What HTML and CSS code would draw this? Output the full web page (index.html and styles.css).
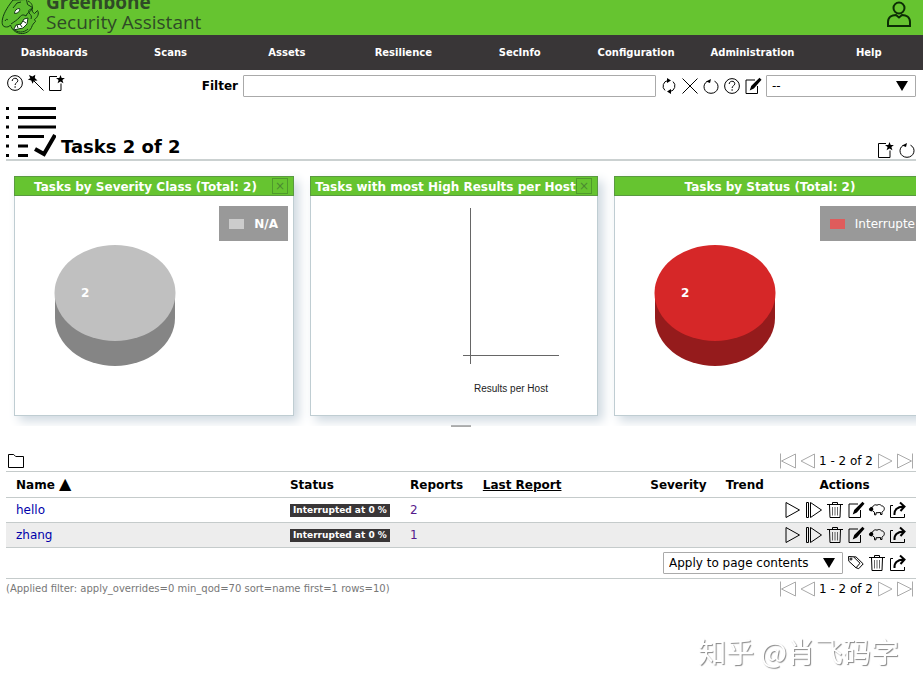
FILE: index.html
```
<!DOCTYPE html>
<html lang="en">
<head>
<meta charset="UTF-8">
<meta name="viewport" content="width=device-width, initial-scale=1">
<title>Greenbone Security Assistant - Tasks</title>
<link rel="stylesheet" href="styles.css">
</head>
<body>

<!-- shared icons -->
<svg class="sprite" aria-hidden="true">
  <symbol id="i-help" viewBox="0 0 18 18"><circle cx="9" cy="9" r="7.4"/><path d="M6.200 7c0-3.600 5.600-3.600 5.600-.3 0 2-2.700 2-2.700 4.300M9.100 12.200v1.600"/></symbol>
  <symbol id="i-wizard" viewBox="0 0 18 18"><path d="M7 7l9.500 9.500"/><path class="solid" d="M2 1l3.400 1.600L8.300.8l-.5 3.300 2.700 2.400-3.500.2-1.500 3-1.200-3.300L.8 5.500l2.500-1.300z"/></symbol>
  <symbol id="i-new" viewBox="0 0 18 18"><path d="M9 2.500H1.500v14h11.500V9.500"/><path class="solid" d="M12.500 1l1.200 3h3.200l-2.500 2.100 1 3.200-2.900-1.900-2.900 1.900 1-3.200L8 4h3.300z"/></symbol>
  <symbol id="i-refresh" viewBox="0 0 18 18"><path d="M8 3.500A5.700 5.700 0 0 0 5 13.400M10 14.500A5.700 5.700 0 0 0 13 4.600"/><path class="solid" d="M7 1l4 2.500-4 2.500zM11 12l-4 2.500 4 2.500z"/></symbol>
  <symbol id="i-close" viewBox="0 0 18 18"><path d="M1.500 1.500l15 15M16.500 1.500l-15 15"/></symbol>
  <symbol id="i-reset" viewBox="0 0 18 18"><path d="M5 4.500C-.5 8 2 16.300 9 16.300c7.500 0 9.500-9.300 3.500-12.100"/><path class="solid" d="M4 4.500L9 2 8 6z"/></symbol>
  <symbol id="i-edit" viewBox="0 0 18 18"><path d="M11 3H2v13.500h11.500V9"/><path class="solid" d="M15.500.8l2 2-7.600 8.600-4.200 2 1.500-4.500z"/></symbol>
  <symbol id="i-start" viewBox="0 0 18 18"><path d="M2 1.500v15L15.500 9z"/></symbol>
  <symbol id="i-resume" viewBox="0 0 18 18"><path d="M1.500 1.500v15h2v-15zM5.500 1.500v15L16.500 9z"/></symbol>
  <symbol id="i-trash" viewBox="0 0 18 18"><path d="M1 3.500h16M6.500 3.500v-2h5v2M3.500 4l.5 12.500h10l.5-12.500"/><path class="faint" d="M6.500 6v8.500M9 6v8.500M11.500 6v8.500"/></symbol>
  <symbol id="i-clone" viewBox="0 0 18 18"><path d="M4.500 6C5.500 4 7.500 3.300 9 4.200c1.800-1.200 3.500-.7 4.500.6 2.800 0 3.800 3.700 1.700 5.200l-1.200 1.200V13.500h-1.500v-2l-4.500.3v2H6.500v-2.500L4.500 9.800"/><path class="solid" d="M.8 8L3 5.800l2 .7.300 2.500-1.800 1.500-2-.8z"/></symbol>
  <symbol id="i-export" viewBox="0 0 18 18"><path d="M4 4.500H1.500v12h14V13"/><path class="thick" d="M5.500 14C5 9 8 5.800 14.500 5.500M11 1.500l4.500 4L11.500 10"/></symbol>
  <symbol id="i-tag" viewBox="0 0 18 18"><path d="M1.500 2.500l5 .3 6.500 6.400-4 4.600L1.800 7.200zM6.500 2.800l2.500.1 7.200 7-4.500 4.800-2.700-1"/><circle cx="4" cy="5" r="1"/></symbol>
  <symbol id="i-folder" viewBox="0 0 18 18"><path d="M2.500 15.500v-13h5.200l2 2h7.800v11z"/></symbol>
  <symbol id="i-first" viewBox="0 0 18 18"><path d="M1.500 1.500v15M16.500 2v14L2.500 9z"/></symbol>
  <symbol id="i-prev" viewBox="0 0 18 18"><path d="M15.500 2v14L2 9z"/></symbol>
  <symbol id="i-next" viewBox="0 0 18 18"><path d="M2.500 2v14L16 9z"/></symbol>
  <symbol id="i-last" viewBox="0 0 18 18"><path d="M16.500 1.500v15M1.500 2v14L15.500 9z"/></symbol>
</svg>

<header class="topbar">
  <a class="brand" href="#">
    <svg class="dragon" viewBox="0 0 40 35" aria-hidden="true">
      <path class="skin" d="M13 0C9 5 4 12 2.500 19c-1 5 0 8 4 8 2.500 0 3-1 4-2 1 4 5 8 10 8.500 5 .5 9-2 11-6 1-3 2-4 4-6l-1-2c3-2 5-6 3-9l-3 3c-2-1-3-3-2-6l-5-3-1-5z"/>
      <path d="M28 1c4 2 5 5 4 8-2 4-5 3-6 7-3-2-5-1-7 2-2 2-5 4-8 6M32 9c-3 0-4 2-3 4 2 2 3 3 2 6M14 29c3 4 10 4 14 0M5 21c1-2 2-2 3-1M13 8l4-5 4-1"/>
      <path class="white" d="M14.500 13.500c0-3 2-5 5-5 1 2-1 5-5 5zM13.500 30l2.500-5 5-1 3-5 4-1-1 6-4 4-5 1z"/>
      <path d="M17 25l1 3M20 24l2 3M23 21l3 2"/>
    </svg>
    <span class="brand-text"><strong>Greenbone</strong><span>Security Assistant</span></span>
  </a>
  <button class="user" aria-label="User">
    <svg viewBox="0 0 26 26" aria-hidden="true"><circle cx="13" cy="7" r="5.500"/><path d="M2 25v-4c0-5 4-7 8-7l3 2.500 3-2.500c4 0 8 2 8 7v4z"/></svg>
  </button>
</header>

<nav class="menu">
  <a href="#">Dashboards</a>
  <a href="#">Scans</a>
  <a href="#">Assets</a>
  <a href="#">Resilience</a>
  <a href="#">SecInfo</a>
  <a href="#">Configuration</a>
  <a href="#">Administration</a>
  <a href="#">Help</a>
</nav>

<main>
  <div class="toolbar">
    <div class="icons">
      <button aria-label="Help"><svg><use href="#i-help"/></svg></button>
      <button aria-label="Task wizard"><svg><use href="#i-wizard"/></svg></button>
      <button aria-label="New task"><svg><use href="#i-new"/></svg></button>
    </div>
    <form class="filter">
      <label for="filter">Filter</label>
      <input id="filter" type="text">
      <div class="icons">
        <button type="button" aria-label="Update filter"><svg><use href="#i-refresh"/></svg></button>
        <button type="button" aria-label="Remove filter"><svg><use href="#i-close"/></svg></button>
        <button type="button" aria-label="Reset filter"><svg><use href="#i-reset"/></svg></button>
        <button type="button" aria-label="Filter help"><svg><use href="#i-help"/></svg></button>
        <button type="button" aria-label="Edit filter"><svg><use href="#i-edit"/></svg></button>
      </div>
      <span class="select"><select aria-label="Saved filter"><option>--</option></select></span>
    </form>
  </div>

  <div class="heading">
    <svg class="task-icon" viewBox="0 0 50 51" aria-hidden="true">
      <path d="M0 2.500h3M0 11.500h3M0 21h3M0 30.500h3M0 40h3M0 49.500h3M12 2.500h38M12 11.500h38M12 21h38M12 30.500h26M12 40h10M12 49.500h10"/>
      <path class="check" d="M29 43l9 5 11-19"/>
    </svg>
    <h1>Tasks 2 of 2</h1>
    <div class="icons">
      <button aria-label="New display"><svg><use href="#i-new"/></svg></button>
      <button aria-label="Reset displays"><svg><use href="#i-reset"/></svg></button>
    </div>
  </div>

  <div class="dashboard">
    <section class="display">
      <h2>Tasks by Severity Class (Total: 2)</h2>
      <button class="remove" aria-label="Remove display">×</button>
      <div class="chart">
        <svg class="pie gray" viewBox="0 0 122 121" role="img" aria-label="N/A: 2">
          <path class="side" d="M1 48v25a60 48 0 0 0 120 0V48z"/>
          <ellipse class="top" cx="61" cy="48" rx="60.500" ry="48"/>
          <text x="27" y="52">2</text>
        </svg>
        <div class="legend"><i class="swatch gray"></i><b>N/A</b></div>
      </div>
    </section>

    <section class="display">
      <h2>Tasks with most High Results per Host</h2>
      <button class="remove" aria-label="Remove display">×</button>
      <div class="chart">
        <svg class="axes" viewBox="0 0 286 218" role="img" aria-label="Results per Host">
          <path d="M159.500 13v156M152 160.500h96"/>
          <text x="163" y="197">Results per Host</text>
        </svg>
      </div>
    </section>

    <section class="display wide">
      <h2>Tasks by Status (Total: 2)</h2>
      <div class="chart">
        <svg class="pie red" viewBox="0 0 122 121" role="img" aria-label="Interrupted: 2">
          <path class="side" d="M1 48v25a60 48 0 0 0 120 0V48z"/>
          <ellipse class="top" cx="61" cy="48" rx="60.500" ry="48"/>
          <text x="27" y="52">2</text>
        </svg>
        <div class="legend"><i class="swatch red"></i><span>Interrupte</span></div>
      </div>
    </section>
  </div>
  <div class="resizer"></div>

  <div class="list-bar">
    <button aria-label="Toggle details"><svg><use href="#i-folder"/></svg></button>
    <div class="pager">
      <button aria-label="First"><svg><use href="#i-first"/></svg></button>
      <button aria-label="Previous"><svg><use href="#i-prev"/></svg></button>
      <span>1 - 2 of 2</span>
      <button aria-label="Next"><svg><use href="#i-next"/></svg></button>
      <button aria-label="Last"><svg><use href="#i-last"/></svg></button>
    </div>
  </div>

  <table class="tasks">
    <thead>
      <tr>
        <th class="c-name">Name <span class="sort">▲</span></th>
        <th class="c-status">Status</th>
        <th class="c-reports">Reports</th>
        <th class="c-last"><a href="#">Last Report</a></th>
        <th class="c-severity">Severity</th>
        <th class="c-trend">Trend</th>
        <th class="c-actions">Actions</th>
      </tr>
    </thead>
    <tbody>
      <tr>
        <td><a href="#">hello</a></td>
        <td><span class="status">Interrupted at 0 %</span></td>
        <td><a class="visited" href="#">2</a></td>
        <td></td>
        <td></td>
        <td></td>
        <td class="c-actions">
          <div class="icons">
            <button aria-label="Start"><svg><use href="#i-start"/></svg></button>
            <button aria-label="Resume"><svg><use href="#i-resume"/></svg></button>
            <button aria-label="Delete"><svg><use href="#i-trash"/></svg></button>
            <button aria-label="Edit"><svg><use href="#i-edit"/></svg></button>
            <button aria-label="Clone"><svg><use href="#i-clone"/></svg></button>
            <button aria-label="Export"><svg><use href="#i-export"/></svg></button>
          </div>
        </td>
      </tr>
      <tr>
        <td><a href="#">zhang</a></td>
        <td><span class="status">Interrupted at 0 %</span></td>
        <td><a class="visited" href="#">1</a></td>
        <td></td>
        <td></td>
        <td></td>
        <td class="c-actions">
          <div class="icons">
            <button aria-label="Start"><svg><use href="#i-start"/></svg></button>
            <button aria-label="Resume"><svg><use href="#i-resume"/></svg></button>
            <button aria-label="Delete"><svg><use href="#i-trash"/></svg></button>
            <button aria-label="Edit"><svg><use href="#i-edit"/></svg></button>
            <button aria-label="Clone"><svg><use href="#i-clone"/></svg></button>
            <button aria-label="Export"><svg><use href="#i-export"/></svg></button>
          </div>
        </td>
      </tr>
    </tbody>
  </table>

  <div class="bulk">
    <span class="select"><select aria-label="Bulk selection"><option>Apply to page contents</option></select></span>
    <div class="icons">
      <button aria-label="Add tag"><svg><use href="#i-tag"/></svg></button>
      <button aria-label="Delete page contents"><svg><use href="#i-trash"/></svg></button>
      <button aria-label="Export page contents"><svg><use href="#i-export"/></svg></button>
    </div>
  </div>

  <div class="list-foot">
    <small>(Applied filter: apply_overrides=0 min_qod=70 sort=name first=1 rows=10)</small>
    <div class="pager">
      <button aria-label="First"><svg><use href="#i-first"/></svg></button>
      <button aria-label="Previous"><svg><use href="#i-prev"/></svg></button>
      <span>1 - 2 of 2</span>
      <button aria-label="Next"><svg><use href="#i-next"/></svg></button>
      <button aria-label="Last"><svg><use href="#i-last"/></svg></button>
    </div>
  </div>
</main>

<div class="watermark">知乎 @肖飞码字</div>

</body>
</html>
```
FILE: styles.css
```
* {
  margin: 0;
  padding: 0;
  box-sizing: border-box;
}

body {
  min-height: 100vh;
  background: #fff;
  color: #000;
  font-family: Verdana, "DejaVu Sans", sans-serif;
  font-size: 12px;
  line-height: 16px;
  overflow-x: hidden;
}

button {
  display: block;
  background: none;
  border: 0;
  color: inherit;
  font: inherit;
  cursor: pointer;
}

svg {
  display: block;
  fill: none;
  stroke: currentColor;
}

button svg {
  width: 18px;
  height: 18px;
}

.sprite {
  position: absolute;
  width: 0;
  height: 0;
}

.solid {
  fill: currentColor;
  stroke: none;
}

.thick {
  stroke-width: 2;
}

.faint {
  opacity: 0.6;
}

.icons {
  display: flex;
  gap: 3px;
}

/* header */
.topbar {
  display: flex;
  justify-content: space-between;
  align-items: flex-start;
  height: 35px;
  padding-right: 11px;
  background: #66c430;
  overflow: hidden;
}

.brand {
  display: flex;
  align-items: flex-end;
  height: 35px;
  gap: 6px;
  color: #2f4a27;
  text-decoration: none;
}

.dragon {
  width: 40px;
  height: 35px;
  color: #123a12;
}

.dragon .skin {
  fill: #5cbb2e;
}

.dragon .white {
  fill: #fff;
}

.brand-text {
  display: flex;
  flex-direction: column;
  padding-bottom: 3px;
  font-family: "Open Sans", sans-serif;
  font-size: 19px;
  line-height: 20px;
}

.user {
  padding-top: 1px;
  color: #0c2d05;
}

.user svg {
  width: 26px;
  height: 26px;
  stroke-width: 2;
}

.menu {
  display: flex;
  height: 35px;
  background: #393637;
}

/* the outer items bleed a little past the window */
.menu a {
  flex: 1;
  color: #fff;
  font-size: 10px;
  font-weight: bold;
  line-height: 35px;
  text-align: center;
  text-decoration: none;
}

.menu a:first-child {
  margin-left: -4px;
}

.menu a:last-child {
  margin-right: -4px;
}

main {
  padding: 4px 7px 0 6px;
}

/* toolbar */
.toolbar {
  display: flex;
  justify-content: space-between;
  align-items: flex-start;
}

.filter {
  display: flex;
  align-items: center;
  padding-top: 1px;
}

.filter label {
  margin-right: 5px;
  font-weight: bold;
}

.filter input {
  width: 413px;
  height: 22px;
  margin-right: 4px;
  border: 1px solid #aaa;
  border-radius: 1px;
}

.select {
  position: relative;
  display: block;
}

.select::after {
  content: "";
  position: absolute;
  top: 6px;
  right: 8px;
  border: 6px solid transparent;
  border-top: 10px solid #000;
  border-bottom: 0;
  pointer-events: none;
}

.select select {
  appearance: none;
  width: 180px;
  height: 22px;
  padding: 0 5px;
  border: 1px solid #aaa;
  border-radius: 1px;
  background: #fff;
  color: #000;
  font: inherit;
}

.filter .select {
  margin-left: 4px;
}

.filter .select select {
  width: 150px;
}

.heading {
  display: flex;
  align-items: flex-end;
  height: 64px;
  border-bottom: 2px solid #cbd1d1;
}

.task-icon {
  width: 50px;
  height: 51px;
  margin-bottom: 2px;
  stroke-width: 3;
}

.task-icon .check {
  stroke-width: 4;
}

.heading h1 {
  flex: 1;
  margin-left: 5px;
  font-size: 18px;
  line-height: 24px;
}

/* dashboard */
.dashboard {
  display: flex;
  gap: 16px;
  padding: 15px 0 10px 8px;
  overflow: hidden;
}

.display {
  position: relative;
  flex: 0 0 280px;
  height: 240px;
  border: 1px solid #bfcdd2;
  background: #fff;
  box-shadow: 5px 5px 10px #cfd9e1;
}

.display:nth-child(2) {
  flex-basis: 288px;
}

.display.wide {
  flex-basis: 312px;
}

.display h2 {
  height: 20px;
  margin: -1px;
  padding-right: 17px;
  border: 1px solid #5a9a40;
  background: #66c430;
  color: #fff;
  font-size: 12px;
  line-height: 20px;
  text-align: center;
  white-space: nowrap;
}

.display.wide h2 {
  padding-right: 0;
}

.remove {
  position: absolute;
  top: 1px;
  right: 5px;
  width: 16px;
  height: 16px;
  border: 1px solid #4f9a2c;
  color: #4b8a30;
  font-size: 12px;
  line-height: 13px;
}

.chart {
  display: flex;
  justify-content: space-between;
  align-items: flex-start;
  padding: 11px 5px 0 39px;
}

.pie {
  width: 122px;
  height: 121px;
  margin-top: 39px;
  stroke: none;
}

.pie text {
  fill: #fff;
  font-size: 12px;
  font-weight: bold;
}

.pie.gray .top { fill: #c0c0c0; }
.pie.gray .side { fill: #858585; }
.pie.red .top { fill: #d62728; }
.pie.red .side { fill: #951b1c; }

.legend {
  display: flex;
  align-items: center;
  gap: 10px;
  height: 35px;
  padding: 0 10px;
  background: #999;
  color: #fff;
}

.wide .legend {
  margin-right: -5px;
}

.swatch {
  width: 15px;
  height: 10px;
}

.swatch.gray { background: #ccc; }
.swatch.red { background: #df5c5c; }

.chart:has(.axes) {
  padding: 0;
}

.axes {
  width: 286px;
  height: 218px;
  stroke: #666;
}

.axes text {
  fill: #222;
  stroke: none;
  font-family: "Liberation Sans", sans-serif;
  font-size: 10px;
}

.resizer {
  width: 20px;
  height: 2px;
  margin: -1px auto 0;
  background: #aaa;
}

/* task list */
.list-bar {
  display: flex;
  align-items: center;
  justify-content: space-between;
  padding-bottom: 1px;
  margin-top: 25px;
}

.pager {
  display: flex;
  align-items: center;
  gap: 2px;
  padding-right: 2px;
}

.pager span {
  padding-right: 1px;
}

.pager button {
  color: #aaa;
}

.tasks {
  width: 100%;
  border-collapse: collapse;
  table-layout: fixed;
}

.tasks th,
.tasks td {
  height: 25px;
  padding: 0 10px;
  border-bottom: 1px solid #c5cbcb;
  text-align: left;
}

.tasks th {
  height: 26px;
  border-top: 1px solid #c5cbcb;
  white-space: nowrap;
}

.tasks th a {
  color: #000;
}

.sort {
  font-size: 16px;
  line-height: 12px;
}

.tasks td a {
  color: #0000aa;
  text-decoration: none;
}

.tasks td a.visited {
  color: #551a8b;
}

.tasks tbody tr:nth-child(even) {
  background: #ededed;
}

.c-name { width: 30.1%; }
.c-status { width: 13.2%; }
.c-reports { width: 8%; }
.c-last { width: 18.4%; }
.c-severity { width: 8.3%; }
.c-trend { width: 6.3%; }

.tasks .c-actions {
  padding: 0;
  text-align: center;
}

.tasks .icons {
  justify-content: flex-end;
  padding-right: 9px;
}

.status {
  display: block;
  width: 100px;
  height: 13px;
  background: #393637;
  color: #fff;
  font-size: 9px;
  font-weight: bold;
  line-height: 13px;
  text-align: center;
  white-space: nowrap;
}

.bulk {
  display: flex;
  align-items: center;
  justify-content: flex-end;
  gap: 4px;
  padding: 4px 9px 4px 0;
}

.list-foot {
  display: flex;
  align-items: center;
  justify-content: space-between;
  padding-top: 1px;
  border-top: 1px solid #c5cbcb;
}

.list-foot small {
  color: #777;
  font-size: 10px;
}

.watermark {
  position: fixed;
  right: 24px;
  bottom: 20px;
  color: #fff;
  font-family: "Noto Sans CJK SC", sans-serif;
  font-size: 28px;
  line-height: 40px;
  text-shadow: 1px 1px 1px #888;
}
```
